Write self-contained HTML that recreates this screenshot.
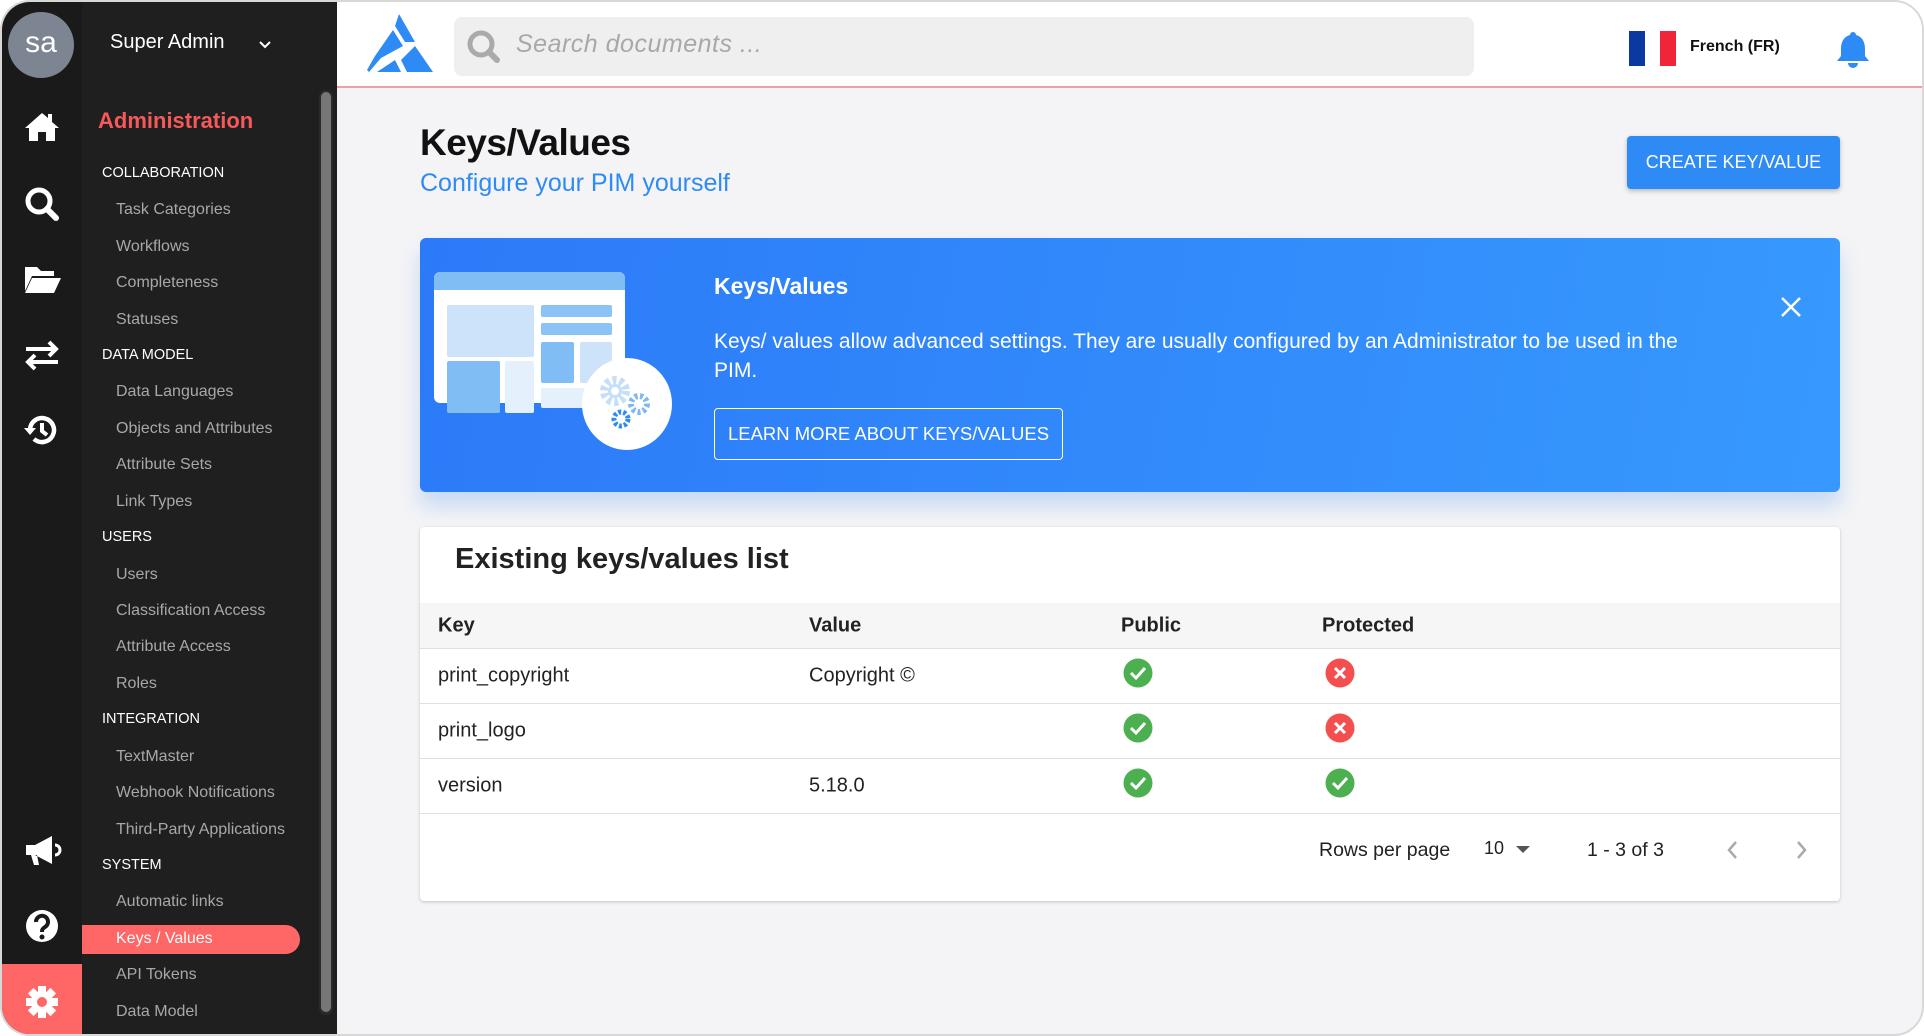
<!DOCTYPE html>
<html><head><meta charset="utf-8">
<style>
*{box-sizing:border-box;margin:0;padding:0}
html,body{width:1924px;height:1036px;overflow:hidden;background:#fff;font-family:"Liberation Sans",sans-serif}
#win{position:absolute;left:0;top:0;width:1924px;height:1036px;border-radius:30px;overflow:hidden;border:2px solid #d8d8d8;background:#f4f4f6}
#rail{position:absolute;left:0;top:0;width:80px;height:1036px;background:#1a1a1a}
#side{position:absolute;left:80px;top:0;width:255px;height:1036px;background:#1f1f1f}
.av{position:absolute;left:6px;top:10px;width:66px;height:66px;border-radius:50%;background:#7d8592;color:#fff;font-size:30px;text-align:center;line-height:62px}
.ri{position:absolute;left:20px;width:40px;height:40px}
.gearbg{position:absolute;left:0;top:962px;width:80px;height:74px;background:#f66}
.sa{position:absolute;left:108px;top:29px;color:#fff;font-size:20px}
.adm{position:absolute;left:96px;top:106px;color:#f5595a;font-size:22px;font-weight:bold}
.it{position:absolute;left:114px;color:#a8a8a8;font-size:16px}
.sec{position:absolute;left:100px;color:#fff;font-size:14.5px}
.sel{position:absolute;left:80px;top:923px;width:218px;height:29px;background:#f66;border-radius:0 15px 15px 0}
.sb{position:absolute;left:317px;top:88px;width:14px;height:925px;background:#2a2a2a;border-radius:7px}
.sb i{position:absolute;left:2px;top:2px;width:10px;height:920px;background:#777;border-radius:5px}
#hdr{position:absolute;left:335px;top:0;right:0;height:86px;background:#fff;border-bottom:2px solid #f0a0a0}
.search{position:absolute;left:117px;top:15px;width:1020px;height:59px;background:#efefef;border-radius:8px}
.search span{position:absolute;left:62px;top:13px;font-size:25px;font-style:italic;color:#a8a8a8;letter-spacing:.5px}
.main{position:absolute;font-family:"Liberation Sans",sans-serif}
.btn{position:absolute;left:1625px;top:134px;width:213px;height:53px;background:#2e8bf5;border-radius:4px;color:#fff;font-size:18px;text-align:center;line-height:53px;box-shadow:0 2px 5px rgba(0,0,0,.25)}
.banner{position:absolute;left:418px;top:236px;width:1420px;height:254px;border-radius:6px;background:linear-gradient(100deg,#2c7af8,#3799fd);box-shadow:0 14px 20px rgba(60,140,240,.25)}
.card{position:absolute;left:418px;top:525px;width:1420px;height:374px;background:#fff;border-radius:4px;box-shadow:0 1px 3px rgba(0,0,0,.2)}
.row{position:absolute;left:0;width:1420px;border-bottom:1px solid #e0e0e0;font-size:20px;color:#222}
.row span{position:absolute;top:50%;transform:translateY(-50%)}
</style></head><body>
<div id="win">
<div id="rail">
 <div class="av">sa</div>
 <svg class="ri" style="top:105px" viewBox="0 0 40 40"><path d="M20 6 L3 21 L7 21 L7 34 L16 34 L16 25 L24 25 L24 34 L33 34 L33 21 L37 21 L30 15 L30 7 L26 7 L26 11Z" fill="#fff"/></svg>
 <svg class="ri" style="top:182px" viewBox="0 0 40 40"><circle cx="17" cy="17" r="11" fill="none" stroke="#fff" stroke-width="5"/><path d="M25 25 L34 34" stroke="#fff" stroke-width="6" stroke-linecap="round"/></svg>
 <svg class="ri" style="top:257px" viewBox="0 0 40 40"><path d="M3 8 h12 l4 4 h13 v5 H10 L3 32Z M10 19 H39 L32 34 H3Z" fill="#fff"/></svg>
 <svg class="ri" style="top:333px" viewBox="0 0 40 40"><path d="M4 14 H34 M27 7 L34 14 L27 21 M36 27 H6 M13 20 L6 27 L13 34" stroke="#fff" stroke-width="4" fill="none"/></svg>
 <svg class="ri" style="top:408px" viewBox="0 0 40 40"><path d="M8 20 A12 12 0 1 1 12 29" stroke="#fff" stroke-width="4.5" fill="none"/><path d="M2 18 L8 25 L14 18Z" fill="#fff"/><path d="M20 13 V21 L25 25" stroke="#fff" stroke-width="4" fill="none"/></svg>
 <svg class="ri" style="top:828px" viewBox="0 0 40 40"><path d="M4 15 H13 L30 6 V34 L13 25 H4Z M9 25 L12 35 H17 L15 25Z" fill="#fff"/><path d="M33 15 a5 5 0 0 1 0 10" stroke="#fff" stroke-width="3" fill="none"/></svg>
 <svg class="ri" style="top:904px" viewBox="0 0 40 40"><circle cx="20" cy="20" r="16" fill="#fff"/><path d="M14 16 a6 6 0 1 1 9 5 c-3 2 -3 3 -3 5" stroke="#1a1a1a" stroke-width="4" fill="none"/><circle cx="20" cy="31" r="2.5" fill="#1a1a1a"/></svg>
 <div class="gearbg"></div>
 <svg class="ri" style="top:980px" viewBox="0 0 40 40"><g fill="#fff"><circle cx="20" cy="20" r="11"/><rect x="16" y="4" width="8" height="32"/><rect x="4" y="16" width="32" height="8"/><rect x="16" y="4" width="8" height="32" transform="rotate(45 20 20)"/><rect x="16" y="4" width="8" height="32" transform="rotate(-45 20 20)"/></g><circle cx="20" cy="20" r="5" fill="#f66"/></svg>
</div>
<div id="side">
 <div class="sa" style="left:28px">Super Admin</div>
 <svg style="position:absolute;left:176px;top:38px" width="14" height="10" viewBox="0 0 14 10"><path d="M2 2 L7 7 L12 2" stroke="#fff" stroke-width="2" fill="none"/></svg>
</div>
<div class="sb"><i></i></div>
<div class="sel"></div>
<div class="adm">Administration</div>
<div class="sec" style="top:163px">COLLABORATION</div>
<div class="it" style="top:199px">Task Categories</div>
<div class="it" style="top:236px">Workflows</div>
<div class="it" style="top:272px">Completeness</div>
<div class="it" style="top:309px">Statuses</div>
<div class="sec" style="top:345px">DATA MODEL</div>
<div class="it" style="top:381px">Data Languages</div>
<div class="it" style="top:418px">Objects and Attributes</div>
<div class="it" style="top:454px">Attribute Sets</div>
<div class="it" style="top:491px">Link Types</div>
<div class="sec" style="top:527px">USERS</div>
<div class="it" style="top:564px">Users</div>
<div class="it" style="top:600px">Classification Access</div>
<div class="it" style="top:636px">Attribute Access</div>
<div class="it" style="top:673px">Roles</div>
<div class="sec" style="top:709px">INTEGRATION</div>
<div class="it" style="top:746px">TextMaster</div>
<div class="it" style="top:782px">Webhook Notifications</div>
<div class="it" style="top:819px">Third-Party Applications</div>
<div class="sec" style="top:855px">SYSTEM</div>
<div class="it" style="top:891px">Automatic links</div>
<div class="it" style="top:928px;color:#fff">Keys / Values</div>
<div class="it" style="top:964px">API Tokens</div>
<div class="it" style="top:1001px">Data Model</div>

<div id="hdr">
 <svg style="position:absolute;left:28px;top:10px" width="70" height="62" viewBox="0 0 70 62"><path d="M34 2 L50 30 L40 30 L30 14Z" fill="#2e8bf5"/><path d="M28 18 L38 34 L16 46 L4 60 L2 58 L10 44Z" fill="#2e8bf5"/><path d="M50 34 L68 60 L42 60 L36 48Z" fill="#2e8bf5"/><path d="M12 60 L30 48 L36 60Z" fill="#2e8bf5"/></svg>
 <div class="search"><svg style="position:absolute;left:10px;top:10px" width="40" height="40" viewBox="0 0 40 40"><circle cx="17" cy="17" r="11" fill="none" stroke="#aaa" stroke-width="5"/><path d="M25 25 L33 33" stroke="#aaa" stroke-width="6" stroke-linecap="round"/></svg><span>Search documents ...</span></div>
 <div style="position:absolute;left:1292px;top:29px;width:47px;height:35px;display:flex"><div style="flex:1;background:#0a3aa0"></div><div style="flex:1;background:#fff"></div><div style="flex:1;background:#f0253a"></div></div>
 <div style="position:absolute;left:1353px;top:36px;font-size:16px;font-weight:bold;color:#111">French (FR)</div>
 <svg style="position:absolute;left:1498px;top:28px" width="36" height="38" viewBox="0 0 36 38"><path d="M18 2 a3 3 0 0 1 3 3 c7 2 9 8 9 14 v7 l4 5 H2 l4 -5 v-7 c0 -6 2 -12 9 -14 a3 3 0 0 1 3 -3Z" fill="#2e8bf5"/><path d="M13 33 a5 5 0 0 0 10 0Z" fill="#2e8bf5"/></svg>
</div>

<div class="main" style="left:418px;top:120px;font-size:37px;font-weight:bold;color:#111;letter-spacing:-.5px">Keys/Values</div>
<div class="main" style="left:418px;top:167px;font-size:25px;color:#2e8bf5">Configure your PIM yourself</div>
<div class="btn">CREATE KEY/VALUE</div>

<div class="banner">
 <svg style="position:absolute;left:14px;top:32px" width="250" height="190" viewBox="0 0 250 190">
  <rect x="0" y="2" width="191" height="131" rx="6" fill="#fff"/>
  <path d="M0 8 a6 6 0 0 1 6 -6 h179 a6 6 0 0 1 6 6 v12 H0Z" fill="#80bdf5"/>
  <rect x="13" y="35" width="87" height="52" rx="2" fill="#cde3fa"/>
  <rect x="107" y="35" width="71" height="12" rx="2" fill="#8cc3f6"/>
  <rect x="107" y="53" width="71" height="12" rx="2" fill="#8cc3f6"/>
  <rect x="107" y="72" width="33" height="41" rx="2" fill="#80bdf5"/>
  <rect x="146" y="72" width="32" height="41" rx="2" fill="#cde3fa"/>
  <rect x="13" y="93" width="53" height="52" rx="2" fill="#80bdf5" transform="translate(0,-2)"/>
  <rect x="71" y="91" width="29" height="52" rx="2" fill="#e4f0fc"/>
  <rect x="107" y="118" width="71" height="20" rx="2" fill="#e4f0fc"/>
  <ellipse cx="193" cy="134" rx="45" ry="46" fill="#fff"/>
  <circle cx="181" cy="121" r="11" fill="none" stroke="#c5dffa" stroke-width="8" stroke-dasharray="4 3"/>
  <circle cx="181" cy="121" r="7" fill="#c5dffa"/><circle cx="181" cy="121" r="4" fill="#fff"/>
  <circle cx="205" cy="134" r="8" fill="none" stroke="#7fb8f3" stroke-width="6" stroke-dasharray="3 2.5"/><circle cx="205" cy="134" r="3" fill="#fff"/>
  <circle cx="187" cy="149" r="7" fill="none" stroke="#2e8bf5" stroke-width="5" stroke-dasharray="3 2"/><circle cx="187" cy="149" r="2.5" fill="#fff"/>
 </svg>
 <div style="position:absolute;left:294px;top:35px;color:#fff;font-size:23px;font-weight:bold">Keys/Values</div>
 <div style="position:absolute;left:294px;top:89px;width:1000px;color:#fff;font-size:21px;line-height:29px">Keys/ values allow advanced settings. They are usually configured by an Administrator to be used in the PIM.</div>
 <div style="position:absolute;left:294px;top:170px;width:349px;height:52px;border:1.5px solid #fff;border-radius:4px;color:#fff;font-size:18.5px;text-align:center;line-height:49px">LEARN MORE ABOUT KEYS/VALUES</div>
 <svg style="position:absolute;left:1360px;top:58px" width="22" height="22" viewBox="0 0 22 22"><path d="M2 2 L20 20 M20 2 L2 20" stroke="#fff" stroke-width="2.5"/></svg>
</div>

<div class="card">
 <div style="position:absolute;left:35px;top:16px;font-size:29px;font-weight:bold;color:#222">Existing keys/values list</div>
 <div class="row" style="top:76px;height:46px;background:#f6f6f6;font-weight:bold"><span style="left:18px">Key</span><span style="left:389px">Value</span><span style="left:701px">Public</span><span style="left:902px">Protected</span></div>
 <div class="row" style="top:122px;height:55px"><span style="left:18px">print_copyright</span><span style="left:389px">Copyright ©</span></div>
 <div class="row" style="top:177px;height:55px"><span style="left:18px">print_logo</span></div>
 <div class="row" style="top:232px;height:55px"><span style="left:18px">version</span><span style="left:389px">5.18.0</span></div>
 <svg style="position:absolute;left:703px;top:131px" width="30" height="150" viewBox="0 0 30 150"><g fill="#4caf50"><circle cx="15" cy="15" r="14.5"/><circle cx="15" cy="70" r="14.5"/><circle cx="15" cy="125" r="14.5"/></g><g stroke="#fff" stroke-width="3" fill="none"><path d="M8 15 L13 20 L22 10"/><path d="M8 70 L13 75 L22 65"/><path d="M8 125 L13 130 L22 120"/></g></svg>
 <svg style="position:absolute;left:905px;top:131px" width="30" height="150" viewBox="0 0 30 150"><g fill="#f44f4f"><circle cx="15" cy="15" r="14.5"/><circle cx="15" cy="70" r="14.5"/></g><circle cx="15" cy="125" r="14.5" fill="#4caf50"/><g stroke="#fff" stroke-width="3" fill="none"><path d="M10 10 L20 20 M20 10 L10 20"/><path d="M10 65 L20 75 M20 65 L10 75"/><path d="M8 125 L13 130 L22 120"/></g></svg>
 <div style="position:absolute;left:899px;top:312px;font-size:19.5px;color:#222">Rows per page</div>
 <div style="position:absolute;left:1064px;top:311px;font-size:18px;color:#222">10</div>
 <svg style="position:absolute;left:1096px;top:319px" width="14" height="8"><path d="M0 0 H14 L7 7Z" fill="#555"/></svg>
 <div style="position:absolute;left:1167px;top:312px;font-size:19.5px;color:#222">1 - 3 of 3</div>
 <svg style="position:absolute;left:1306px;top:313px" width="12" height="20"><path d="M10 2 L3 10 L10 18" stroke="#aaa" stroke-width="2.5" fill="none"/></svg>
 <svg style="position:absolute;left:1376px;top:313px" width="12" height="20"><path d="M2 2 L9 10 L2 18" stroke="#aaa" stroke-width="2.5" fill="none"/></svg>
</div>
</div>
</body></html>
